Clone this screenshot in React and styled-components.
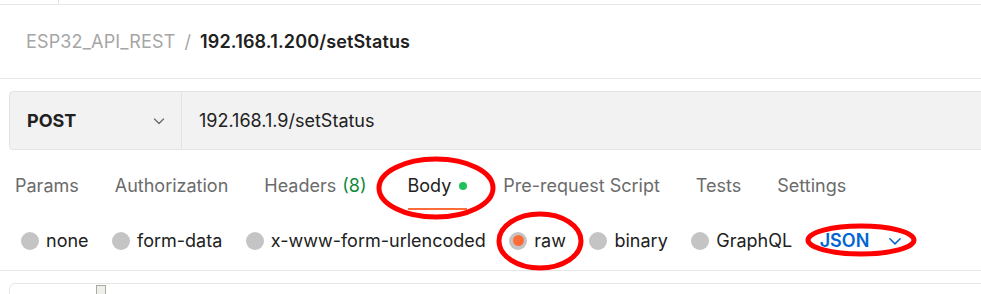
import styled, { createGlobalStyle } from "styled-components";

const Global = createGlobalStyle`
  html, body {
    margin: 0;
    padding: 0;
    background: #fff;
    overflow: hidden;
  }
  body {
    font-family: Inter, "Noto Sans", sans-serif;
    font-size: 18px;
    color: #212121;
  }
`;

const Page = styled.div`
  position: relative;
  width: 981px;
  height: 294px;
  overflow: hidden;
`;

const TopStrip = styled.div`
  height: 4px;
  border-bottom: 1px solid #e6e6e6;
  display: flex;
`;

const TopCell = styled.div`
  width: 58px;
  border-right: 1px solid #e6e6e6;
`;

const Header = styled.div`
  height: 73px;
  padding-left: 26px;
  display: flex;
  align-items: center;
  gap: 9px;
  border-bottom: 1px solid #e6e6e6;
  letter-spacing: 0.15px;
`;

const Crumb = styled.span`
  color: #a6a6a6;
`;

const Current = styled.span`
  color: #212121;
  font-weight: 600;
`;

const UrlRow = styled.div`
  margin: 12px -10px 0 9px;
  height: 57px;
  display: flex;
  background: #f2f2f2;
  border: 1px solid #e3e3e3;
  border-radius: 4px 0 0 4px;
`;

const Method = styled.div`
  width: 172px;
  box-sizing: border-box;
  padding: 0 15px 0 17px;
  display: flex;
  align-items: center;
  justify-content: space-between;
  border-right: 1px solid #e3e3e3;
  font-weight: 700;
  color: #212121;
`;

const UrlText = styled.div`
  display: flex;
  align-items: center;
  padding-left: 17px;
  color: #212121;
`;

const Tabs = styled.div`
  height: 61px;
  box-sizing: border-box;
  padding: 10px 0 0 15px;
  display: flex;
  gap: 36px;
`;

const Tab = styled.div`
  position: relative;
  display: flex;
  align-items: center;
  gap: 6px;
  color: ${(p) => (p.$active ? "#212121" : "#6b6b6b")};
  margin-left: ${(p) => p.$shift || 0}px;

  &::after {
    content: "";
    display: ${(p) => (p.$active ? "block" : "none")};
    position: absolute;
    left: 0;
    right: 0;
    bottom: 1px;
    height: 2px;
    background: #ff6c37;
  }
`;

const Count = styled.span`
  color: #0f8a3a;
`;

const Dot = styled.span`
  width: 8px;
  height: 8px;
  border-radius: 50%;
  background: #1ec15b;
  margin-left: 2px;
`;

const Radios = styled.div`
  height: 59px;
  display: flex;
  align-items: center;
  padding-left: 21px;
  border-bottom: 1px solid #e6e6e6;
`;

const Option = styled.label`
  display: flex;
  align-items: center;
  gap: 7px;
  margin-right: 23.5px;
  color: #212121;
`;

const Circle = styled.span`
  width: 18px;
  height: 18px;
  border-radius: 50%;
  background: #c4c4c4;
  display: flex;
  align-items: center;
  justify-content: center;

  &::after {
    content: "";
    display: ${(p) => (p.$on ? "block" : "none")};
    width: 11px;
    height: 11px;
    border-radius: 50%;
    background: #ff6c37;
  }
`;

const Lang = styled.div`
  display: flex;
  align-items: center;
  gap: 18px;
  margin-left: 4px;
  font-weight: 600;
  color: #0265d2;
`;

const Editor = styled.div`
  margin: 12px -10px 0 9px;
  height: 40px;
  border: 1px solid #e6e6e6;
  border-radius: 6px 0 0 0;
  position: relative;
`;

const Broken = styled.span`
  position: absolute;
  left: 86px;
  top: 1px;
  width: 8px;
  height: 10px;
  border: 1px solid #aaa;
  background: #eef0e8;
`;

const Marks = styled.svg`
  position: absolute;
  left: 0;
  top: 0;
  pointer-events: none;
`;

const Chevron = ({ color, size = 14 }) => (
  <svg width={size} height={size} viewBox="0 0 14 14" fill="none">
    <path d="M2.5 5l4.5 4.5L11.5 5" stroke={color} strokeWidth="1.3" strokeLinecap="round" strokeLinejoin="round" />
  </svg>
);

const tabs = [
  { label: "Params" },
  { label: "Authorization" },
  { label: "Headers", count: "(8)" },
  { label: "Body", active: true, dot: true, shift: 5 },
  { label: "Pre-request Script" },
  { label: "Tests" },
  { label: "Settings" },
];

const options = [
  { label: "none" },
  { label: "form-data" },
  { label: "x-www-form-urlencoded" },
  { label: "raw", on: true },
  { label: "binary" },
  { label: "GraphQL" },
];

export default function App() {
  return (
    <Page>
      <Global />
      <TopStrip>
        <TopCell />
      </TopStrip>
      <Header>
        <Crumb>ESP32_API_REST</Crumb>
        <Crumb>/</Crumb>
        <Current>192.168.1.200/setStatus</Current>
      </Header>

      <UrlRow>
        <Method>
          POST
          <Chevron color="#6b6b6b" />
        </Method>
        <UrlText>192.168.1.9/setStatus</UrlText>
      </UrlRow>

      <Tabs>
        {tabs.map((t) => (
          <Tab key={t.label} $active={t.active} $shift={t.shift}>
            {t.label}
            {t.count && <Count>{t.count}</Count>}
            {t.dot && <Dot />}
          </Tab>
        ))}
      </Tabs>

      <Radios>
        {options.map((o) => (
          <Option key={o.label}>
            <Circle $on={o.on} />
            {o.label}
          </Option>
        ))}
        <Lang>
          JSON
          <Chevron color="#0265d2" size={16} />
        </Lang>
      </Radios>

      <Editor>
        <Broken />
      </Editor>

      <Marks width="981" height="294">
        <g fill="none" stroke="#ff0000" strokeWidth="5">
          <ellipse cx="436" cy="188" rx="57" ry="29" />
          <ellipse cx="540" cy="241" rx="41" ry="27" />
          <ellipse cx="861" cy="240" rx="53" ry="14" />
        </g>
      </Marks>
    </Page>
  );
}
